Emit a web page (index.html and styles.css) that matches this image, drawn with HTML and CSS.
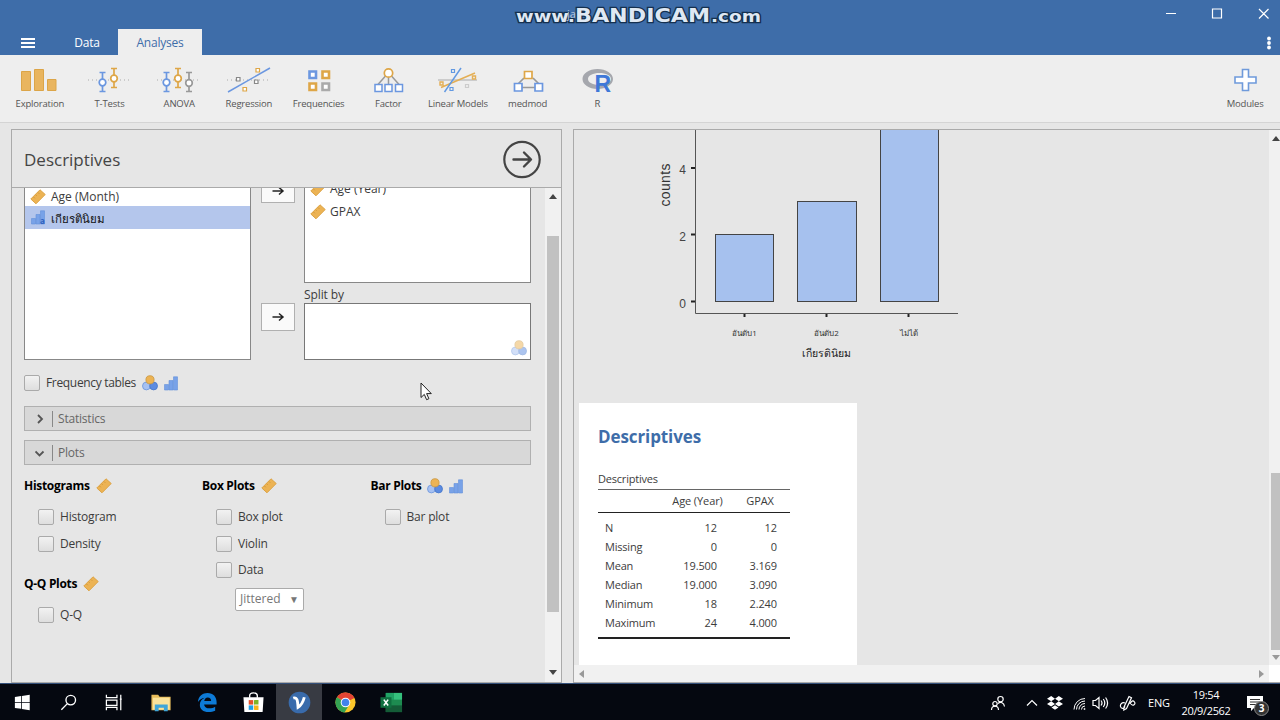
FILE: index.html
```html
<!DOCTYPE html>
<html lang="en">
<head>
    <meta charset="UTF-8">
    <meta name="viewport" content="width=device-width, initial-scale=1.0">
    <title>jamovi</title>
    <link rel="stylesheet" href="styles.css">
</head>
<body>
    <!-- shared measure-type icons -->
    <svg class="defs" width="0" height="0">
        <symbol id="ruler" viewBox="0 0 16 16">
            <path d="M.8 10 10 .8 15.200 5.500 6 14.800z" fill="#ecb354" stroke="#dca345" stroke-width="1" stroke-linejoin="round"/>
            <path d="M3.500 8l1.300 1.300M5.700 5.800l1 1M8 3.500l1.300 1.300" stroke="#c88c2e" stroke-width=".7"/>
        </symbol>
        <symbol id="nominal" viewBox="0 0 16 16">
            <circle cx="4.400" cy="11" r="3.900" fill="#a6c1f2" stroke="#6b94dc" stroke-width=".8"/>
            <circle cx="11.600" cy="11" r="3.900" fill="#5c8be0" stroke="#4677ca" stroke-width=".8"/>
            <circle cx="8" cy="4.800" r="4.100" fill="#ecb354" stroke="#c99843" stroke-width=".8"/>
        </symbol>
        <symbol id="ordinal" viewBox="0 0 16 16">
            <path d="M1.500 9.500h4V15h-4zM6 5.500h4V15H6zM10.500 1.800h4V15h-4z" fill="#78a2e8" stroke="#6390da" stroke-width=".6"/>
        </symbol>
    </svg>

    <header class="titlebar">
        <nav class="tabs">
            <button class="menu"><span></span><span></span><span></span></button>
            <button class="tab">Data</button>
            <button class="tab active">Analyses</button>
        </nav>
        <div class="window-side">
            <svg width="119" height="27" viewBox="0 0 119 27" fill="none" stroke="#fff" stroke-width="1.200">
                <path d="M5 13.500h10M51.500 9h9v9h-9zM98 9l9.500 9.500M107.500 9 98 18.500"/>
            </svg>
            <svg class="dots" width="6" height="14" viewBox="0 0 6 14" fill="#fff">
                <circle cx="3" cy="2.500" r="1.900"/><circle cx="3" cy="7" r="1.900"/><circle cx="3" cy="11.500" r="1.900"/>
            </svg>
        </div>
        <svg class="watermark" width="260" height="30" viewBox="0 0 260 30">
            <text class="mark" x="6" y="21.500" font-size="15" textLength="59" lengthAdjust="spacingAndGlyphs">www.</text>
            <text class="mark" x="65" y="22" font-size="19.500" textLength="135" lengthAdjust="spacingAndGlyphs">BANDICAM</text>
            <text class="mark" x="201" y="21.500" font-size="15" textLength="50" lengthAdjust="spacingAndGlyphs">.com</text>
            <text class="app-title" x="57" y="18">ja</text>
        </svg>
    </header>

    <div class="toolbar">
        <div class="tool">
            <svg width="44" height="30" viewBox="0 0 44 30" fill="#e9b55f" stroke="#dca548">
                <path d="M3.500 6.500h9v19h-9zM16.500 4.500h9v21h-9zM29.500 14.500h8.500v11h-8.500z"/>
            </svg>
            <span>Exploration</span>
        </div>
        <div class="tool">
            <svg width="44" height="30" viewBox="0 0 44 30" fill="none" stroke-width="1.700">
                <path d="M0 15h44" stroke="#aaa" stroke-width="1" stroke-dasharray="1 3"/>
                <path d="M14.500 7.500v19M11.500 7.500h6M11.500 26.500h6" stroke="#6b97e0"/><circle cx="14.500" cy="17.500" r="3.300" fill="#fff" stroke="#6b97e0"/>
                <path d="M26 3.500v19M23 3.500h6M23 22.500h6" stroke="#dea647"/><circle cx="26" cy="13.500" r="3.300" fill="#fff" stroke="#dea647"/>
            </svg>
            <span>T-Tests</span>
        </div>
        <div class="tool">
            <svg width="44" height="30" viewBox="0 0 44 30" fill="none" stroke-width="1.700">
                <path d="M0 15h44" stroke="#aaa" stroke-width="1" stroke-dasharray="1 3"/>
                <path d="M9.500 7.500v19M6.500 7.500h6M6.500 26.500h6" stroke="#6b97e0"/><circle cx="9.500" cy="17.500" r="3.300" fill="#fff" stroke="#6b97e0"/>
                <path d="M21 3.500v19M18 3.500h6M18 22.500h6" stroke="#dea647"/><circle cx="21" cy="13.500" r="3.300" fill="#fff" stroke="#dea647"/>
                <path d="M32 7.500v19M29 7.500h6M29 26.500h6" stroke="#999"/><circle cx="32" cy="18" r="3.300" fill="#fff" stroke="#999"/>
            </svg>
            <span>ANOVA</span>
        </div>
        <div class="tool">
            <svg width="44" height="30" viewBox="0 0 44 30" fill="#fff" stroke-width="1.200">
                <path d="M0 15h44" stroke="#aaa" stroke-width="1" stroke-dasharray="1 3"/>
                <path d="M1 27 43 3" stroke="#6b97e0" stroke-width="1.500"/>
                <path d="M29 3.500h3.500V7H29zM16 22.500h3.500V26H16z" stroke="#dea647"/>
                <path d="M9.500 12.500H13V16H9.500zM27.500 15H31v3.500h-3.500z" stroke="#888"/>
            </svg>
            <span>Regression</span>
        </div>
        <div class="tool">
            <svg width="44" height="30" viewBox="0 0 44 30" fill="#fff" stroke-width="2.600">
                <path d="M12.500 6.500H19V13h-6.500z" stroke="#6b97e0"/>
                <path d="M25.500 6.500H32V13h-6.500zM12.500 18.500H19V25h-6.500z" stroke="#dea647"/>
                <path d="M25.500 18.500H32V25h-6.500z" stroke="#aaa"/>
            </svg>
            <span>Frequencies</span>
        </div>
        <div class="tool">
            <svg width="44" height="30" viewBox="0 0 44 30" fill="#fff" stroke-width="1.500">
                <path d="M22.500 11v9M19.500 11 11.500 20M25.500 11l8 9" stroke="#999"/>
                <circle cx="22.500" cy="8" r="4.200" stroke="#dea647" stroke-width="1.700"/>
                <path d="M9 19.500h7v7H9zM19 19.500h7v7h-7zM29.500 19.500h7v7h-7z" stroke="#6b97e0"/>
            </svg>
            <span>Factor</span>
        </div>
        <div class="tool">
            <svg width="44" height="30" viewBox="0 0 44 30" fill="none" stroke-width="1.200">
                <path d="M2 15h39" stroke="#aaa"/>
                <path d="M5 22.500 39 8M4 17h3v3H4zM36.500 11h3v3h-3z" stroke="#e4af55" stroke-width="1.400"/>
                <path d="M8.500 27 25 3" stroke="#6299e2" stroke-width="1.500"/>
                <path d="M15.500 4.500h3v3h-3zM14 22.500h3v3h-3z" stroke="#6299e2"/>
                <path d="M29.500 19.500h3v3h-3z" stroke="#ccc"/>
            </svg>
            <span>Linear Models</span>
        </div>
        <div class="tool">
            <svg width="44" height="30" viewBox="0 0 44 30" fill="#fff" stroke-width="1.700">
                <path d="M18 13 11 20M27 13l7 7M15 22.500h15" stroke="#999"/>
                <path d="M18.500 6.500h7.500v7h-7.500z" stroke="#dea647"/>
                <path d="M8.500 18.500H16V26H8.500zM29 18.500h7.500V26H29z" stroke="#6b97e0"/>
            </svg>
            <span>medmod</span>
        </div>
        <div class="tool">
            <svg width="44" height="30" viewBox="0 0 44 30">
                <path fill="#a5a7ad" fill-rule="evenodd" d="M22.500 4C14 4 7.500 8.500 7.500 14s6.500 10 15 10 15.500-4.500 15.500-10S31 4 22.500 4zm2 4c6.500 0 11.500 2.500 11.500 6s-5 6-11.500 6-11.500-2.500-11.500-6 5-6 11.500-6z"/>
                <text class="r-mark" x="19.500" y="26.500">R</text>
            </svg>
            <span>R</span>
        </div>
        <div class="tool modules">
            <svg width="44" height="30" viewBox="0 0 44 30">
                <path d="M19.500 4.500h6v7.500h7.500v6h-7.500v7.500h-6V18H12v-6h7.500z" fill="#fff" stroke="#6f9adb" stroke-width="1.600"/>
            </svg>
            <span>Modules</span>
        </div>
    </div>

    <main class="workspace">
        <section class="options">
            <div class="options-header">
                <h1>Descriptives</h1>
                <svg width="40" height="40" viewBox="0 0 40 40" fill="none" stroke="#444">
                    <circle cx="20" cy="19.500" r="17.700" stroke-width="2.200"/>
                    <path d="M11.500 19.500h17M22 12.500l7 7-7 7" stroke-width="2.400" stroke-linecap="round" stroke-linejoin="round"/>
                </svg>
            </div>
            <div class="options-scroll">
                <div class="options-body">
                    <div class="assign">
                        <ul class="var-list source">
                            <li><svg class="icon"><use href="#ruler"/></svg>Age (Month)</li>
                            <li class="selected">
                                <svg class="icon" viewBox="0 0 16 16"><use href="#ordinal" width="16" height="16"/><text class="text-flag" x="10" y="15">a</text></svg><span class="thai">เกียรตินิยม</span>
                            </li>
                        </ul>
                        <div class="arrows">
                            <button><svg width="14" height="12" viewBox="0 0 14 12"><path d="M1.500 6h10.500M8 2.500 12 6 8 9.500"/></svg></button>
                            <button><svg width="14" height="12" viewBox="0 0 14 12"><path d="M1.500 6h10.500M8 2.500 12 6 8 9.500"/></svg></button>
                        </div>
                        <div class="targets">
                            <ul class="var-list chosen">
                                <li><svg class="icon"><use href="#ruler"/></svg>Age (Year)</li>
                                <li><svg class="icon"><use href="#ruler"/></svg>GPAX</li>
                            </ul>
                            <span class="target-label">Split by</span>
                            <div class="split-box"><svg class="icon"><use href="#nominal"/></svg></div>
                        </div>
                    </div>

                    <label class="check freq"><i></i>Frequency tables <svg class="icon"><use href="#nominal"/></svg><svg class="icon"><use href="#ordinal"/></svg></label>

                    <div class="section-bar">
                        <svg width="10" height="12" viewBox="0 0 10 12"><path d="M3 2l4 4-4 4"/></svg><span>Statistics</span>
                    </div>
                    <div class="section-bar">
                        <svg width="10" height="12" viewBox="0 0 10 12"><path d="M.500 4.500l4 4 4-4"/></svg><span>Plots</span>
                    </div>

                    <div class="plots">
                        <div>
                            <h2>Histograms <svg class="icon"><use href="#ruler"/></svg></h2>
                            <label class="check"><i></i>Histogram</label>
                            <label class="check"><i></i>Density</label>
                            <h2 class="second">Q-Q Plots <svg class="icon"><use href="#ruler"/></svg></h2>
                            <label class="check"><i></i>Q-Q</label>
                        </div>
                        <div>
                            <h2>Box Plots <svg class="icon"><use href="#ruler"/></svg></h2>
                            <label class="check"><i></i>Box plot</label>
                            <label class="check"><i></i>Violin</label>
                            <label class="check"><i></i>Data</label>
                            <div class="select">Jittered<span>▼</span></div>
                        </div>
                        <div>
                            <h2>Bar Plots <svg class="icon"><use href="#nominal"/></svg><svg class="icon"><use href="#ordinal"/></svg></h2>
                            <label class="check"><i></i>Bar plot</label>
                        </div>
                    </div>
                </div>
                <div class="scrollbar">
                    <svg width="8" height="5" viewBox="0 0 8 5"><path d="M0 5h8L4 0z"/></svg>
                    <div class="thumb"></div>
                    <svg width="8" height="5" viewBox="0 0 8 5"><path d="M0 0h8L4 5z"/></svg>
                </div>
            </div>
        </section>

        <section class="results">
            <div class="results-body">
                <svg class="chart" width="400" height="273" viewBox="574 130 400 273">
                    <g fill="#a6c1ee" stroke="#444" stroke-width="1">
                        <rect x="715.500" y="234.500" width="58" height="67"/>
                        <rect x="797.500" y="201.500" width="59" height="100"/>
                        <rect x="880.500" y="120.500" width="58" height="181"/>
                    </g>
                    <path d="M695.500 130v183.500H958" fill="none" stroke="#555"/>
                    <path d="M691 168h4M691 234.500h4M691 301.500h4M744.500 314v3M826.500 314v3M908.500 314v3" stroke="#222" stroke-width="2"/>
                    <g class="axis-num" text-anchor="end">
                        <text x="686" y="174">4</text>
                        <text x="686" y="241">2</text>
                        <text x="686" y="307.500">0</text>
                    </g>
                    <text class="axis-title" transform="translate(670 185) rotate(-90)" text-anchor="middle" textLength="43">counts</text>
                    <g class="axis-cat" text-anchor="middle">
                        <text x="744.500" y="336">อันดับ1</text>
                        <text x="826.500" y="336">อันดับ2</text>
                        <text x="908.500" y="336">ไม่ได้</text>
                    </g>
                    <text class="axis-name" x="826" y="357" text-anchor="middle">เกียรตินิยม</text>
                </svg>
                <article class="result-card">
                    <h2>Descriptives</h2>
                    <table>
                        <caption>Descriptives</caption>
                        <thead>
                            <tr><th></th><th>Age (Year)</th><th>GPAX</th></tr>
                        </thead>
                        <tbody>
                            <tr><td>N</td><td>12</td><td>12</td></tr>
                            <tr><td>Missing</td><td>0</td><td>0</td></tr>
                            <tr><td>Mean</td><td>19.500</td><td>3.169</td></tr>
                            <tr><td>Median</td><td>19.000</td><td>3.090</td></tr>
                            <tr><td>Minimum</td><td>18</td><td>2.240</td></tr>
                            <tr><td>Maximum</td><td>24</td><td>4.000</td></tr>
                        </tbody>
                    </table>
                </article>
            </div>
            <div class="scrollbar">
                <svg width="8" height="5" viewBox="0 0 8 5"><path d="M0 5h8L4 0z"/></svg>
                <div class="thumb"></div>
                <svg class="muted" width="8" height="5" viewBox="0 0 8 5"><path d="M0 0h8L4 5z"/></svg>
            </div>
            <div class="scrollbar-x">
                <svg width="5" height="8" viewBox="0 0 5 8"><path d="M5 0v8L0 4z"/></svg>
                <svg width="5" height="8" viewBox="0 0 5 8"><path d="M0 0v8l5-4z"/></svg>
            </div>
            <div class="corner"></div>
        </section>
    </main>

    <footer class="taskbar">
        <div class="apps">
            <div class="app"><svg viewBox="0 0 24 24" fill="#fff"><path d="M3 6.200l6.500-1v6.300H3zM10.300 5.100 18.500 4v7.500h-8.200zM3 12.300h6.500v6.300L3 17.700zM10.300 12.300h8.200v7.700l-8.200-1.200z"/></svg></div>
            <div class="app"><svg viewBox="0 0 24 24" fill="none" stroke="#fff" stroke-width="1.400"><circle cx="13.300" cy="9.500" r="5"/><path d="M9.800 13.200 3.500 19.500"/></svg></div>
            <div class="app"><svg viewBox="0 0 24 24" fill="none" stroke="#fff" stroke-width="1.300"><path d="M2.500 4v3h11V4M2.500 9.500h11v5.500h-11zM2.500 20v-3h11v3M17.500 4v16M16.500 8.500h2"/></svg></div>
            <div class="app"><svg viewBox="0 0 24 24"><path d="M1.500 4h7l1.500 2h11.500v14h-20z" fill="#e8bd5b"/><path d="M3 7h17.500v12.500H3z" fill="#fae29b"/><path d="M5 21v-7h13.500v7h-4v-3.500H9V21z" fill="#3fa5d8"/></svg></div>
            <div class="app"><svg viewBox="0 0 24 24"><path d="M2 11.500C2.500 5 7 2 12 2c6 0 9.500 4 9.500 9.500V14H8.500c.3 3 3 4 5.500 4 2.300 0 4.300-.6 6-1.600v4.200c-2 1-4.300 1.400-6.800 1.400C7.300 22 4 18.500 4 14.500 4 11 6 8.500 9 7c-3 .5-5.500 2-7 4.500zM8.600 10.500h7.200c0-2.300-1.300-3.700-3.500-3.700-2.100 0-3.400 1.600-3.700 3.700z" fill="#0d7ad6"/></svg></div>
            <div class="app"><svg viewBox="0 0 24 24"><path d="M8 7V5c0-4 8-4 8 0v2" fill="none" stroke="#fff" stroke-width="1.400"/><path d="M1.500 6.500h21L21.500 22h-19z" fill="#fff"/><path d="M7 9.500h4.700v4.700H7z" fill="#e5512b"/><path d="M12.500 9.500h4.700v4.700h-4.700z" fill="#7fb526"/><path d="M7 15h4.700v4.700H7z" fill="#1e9fe6"/><path d="M12.500 15h4.700v4.700h-4.700z" fill="#f7b61c"/></svg></div>
            <div class="app active"><svg viewBox="0 0 24 24"><circle cx="12" cy="12" r="11.300" fill="#396bab"/><path d="M5.500 7.500c4-1.500 4.500 2 5 9.500C14.500 14.500 16 10.500 17 6.500" fill="none" stroke="#fff" stroke-width="3"/></svg></div>
            <div class="app"><svg viewBox="0 0 24 24"><circle cx="12" cy="12" r="10.500" fill="#fbc62a"/><path d="M12 12 3 6.600A10.500 10.500 0 0 1 21.300 7z" fill="#e24434"/><path d="M3 6.600A10.500 10.500 0 0 0 11 22.400L16 14 12 12z" fill="#34a353"/><path d="M12 7h9.300L12 12z" fill="#e24434"/><circle cx="12" cy="12" r="5" fill="#fff"/><circle cx="12" cy="12" r="4" fill="#4283ec"/></svg></div>
            <div class="app"><svg viewBox="0 0 24 24"><path d="M6 2h17v20H6z" fill="#1d8b50"/><path d="M14.500 2H23v7h-8.500z" fill="#35c17d"/><path d="M6 2h8.500v7H6z" fill="#21a366"/><path d="M6 15h17v7H6z" fill="#145c37"/><path d="M.500 6.500h11.500v11H.500z" fill="#107040"/><path d="M4 9l4.500 6.200M8.500 9 4 15.200" stroke="#fff" stroke-width="1.600"/></svg></div>
        </div>
        <div class="tray">
            <svg width="16" height="16" viewBox="0 0 16 16"><circle cx="10.500" cy="4.200" r="2.700"/><circle cx="5" cy="8.700" r="2.200"/><path d="M1.500 15c0-5 7-5 7 0M8 8.500c2.500-2 6-1 6.500 3"/></svg>
            <svg class="chevron" width="12" height="12" viewBox="0 0 12 12"><path d="M1 8.500l5-5 5 5"/></svg>
            <svg class="dropbox" width="16" height="14" viewBox="0 0 16 14"><path d="M4.200 0 0 2.700l4.200 2.600L8 2.700zM11.800 0 8 2.700l3.800 2.600L16 2.700zM4.200 5.300 0 8l4.200 2.600L8 8zM11.800 5.300 8 8l3.800 2.600L16 8zM8 9.200l-3.500 2.300L8 13.800l3.500-2.300z"/></svg>
            <svg class="wifi" width="13" height="13" viewBox="0 0 13 13"><path d="M1 12.500A11 11 0 0 1 12 1.500M3.500 12.500A8.500 8.500 0 0 1 12 4M6 12.500a6 6 0 0 1 6-6M8.500 12.500A3.500 3.500 0 0 1 12 9"/><circle cx="11.500" cy="12" r=".6"/></svg>
            <svg class="volume" width="17" height="14" viewBox="0 0 17 14"><path d="M1 4.500h2.500L7 1.500v11L3.500 9.500H1zM9 4.500q2 2.500 0 5M11.300 3q3 4 0 8M13.600 1.500q4 5.500 0 11"/></svg>
            <svg class="pen" width="17" height="16" viewBox="0 0 17 16"><path d="M5 12 10 1.500l2.500 1.200L7.500 13.500 4.800 15zM6 8c-3-1-5 1-4.500 3.500S5 14 6 11.500M11 9c1-3 3-4 4.500-2s-1.500 4.500-3.500 2"/></svg>
            <span class="lang">ENG</span>
            <div class="clock"><span>19:54</span><span>20/9/2562</span></div>
            <div class="notify">
                <svg width="16" height="15" viewBox="0 0 16 15"><path d="M0 0h16v12H7l-3 3v-3H0z"/><path d="M3 3.500h10M3 6h10M3 8.500h6"/></svg>
                <b>3</b>
            </div>
        </div>
    </footer>

    <svg class="cursor" width="13" height="20" viewBox="0 0 13 20">
        <path d="M1 1v14.500l3.300-3.100 2.300 5.300 2.300-1-2.300-5.100h4.700z" fill="#fff" stroke="#222" stroke-width="1"/>
    </svg>
</body>
</html>
```
FILE: styles.css
```css
* {
    margin: 0;
    padding: 0;
    box-sizing: border-box;
}

body {
    width: 1280px;
    height: 720px;
    overflow: hidden;
    display: flex;
    flex-direction: column;
    background: #e6e6e6;
    color: #3c3c3c;
    font: 12px/16px "Open Sans", "Noto Sans", sans-serif;
}

button {
    font: inherit;
    border: none;
    background: none;
}

svg {
    display: block;
    flex: none;
}

.defs {
    position: absolute;
}

.icon {
    width: 16px;
    height: 16px;
}

/* title bar */
.titlebar {
    position: relative;
    height: 55px;
    flex: none;
    display: flex;
    justify-content: space-between;
    background: #3e6da9;
}

.tabs {
    display: flex;
    align-items: flex-end;
}

.menu {
    width: 56px;
    height: 26px;
    padding: 9px 21px 0;
    display: flex;
    flex-direction: column;
    gap: 2px;
}

.menu span {
    width: 14px;
    height: 2px;
    background: #fff;
}

.tab {
    width: 62px;
    height: 26px;
    padding-top: 2px;
    color: #fff;
    font-size: 12px;
    letter-spacing: -.2px;
}

.tab.active {
    width: 84px;
    background: #eee;
    color: #3e6da9;
}

.window-side {
    display: flex;
    flex-direction: column;
    align-items: flex-end;
}

.dots {
    margin: 9px 8px 0 0;
}

.watermark {
    position: absolute;
    left: 510px;
    top: 0;
}

.mark {
    font-family: "DejaVu Sans", sans-serif;
    font-weight: bold;
    fill: #dfe8f3;
    stroke: #15304f;
    stroke-width: 2.5px;
    paint-order: stroke;
}

.app-title {
    font-size: 11px;
    fill: #b9c9de;
}

/* analyses toolbar */
.toolbar {
    height: 68px;
    flex: none;
    display: flex;
    padding: 10px 0 0 5px;
    background: #eee;
    border-bottom: 1px solid #d4d4d4;
}

.tool {
    width: 69.700px;
    display: flex;
    flex-direction: column;
    align-items: center;
    white-space: nowrap;
    font-size: 9.500px;
    line-height: 14px;
    letter-spacing: -.2px;
    color: #555;
}

.tool span {
    margin-top: 2px;
}

.modules {
    margin-left: auto;
}

.r-mark {
    font: bold 23px "Liberation Sans", sans-serif;
    fill: #3f78d8;
}

/* panels */
.workspace {
    flex: 1;
    min-height: 0;
    display: flex;
    gap: 11px;
    padding: 6px 0 0 11px;
}

.options {
    width: 551px;
    height: 554px;
    display: flex;
    flex-direction: column;
    border: 1px solid #aaa;
}

.options-header {
    height: 58px;
    flex: none;
    display: flex;
    align-items: center;
    justify-content: space-between;
    padding: 2px 19px 0 12px;
    border-bottom: 1px solid #aaa;
}

.options-header h1 {
    font-size: 17px;
    font-weight: 400;
    line-height: 24px;
    color: #444;
}

.options-scroll {
    flex: 1;
    min-height: 0;
    display: flex;
    justify-content: space-between;
    overflow: hidden;
}

.options-body {
    width: 519px;
    padding-left: 12px;
}

.assign {
    height: 172px;
    display: flex;
}

.var-list {
    list-style: none;
    background: #fff;
    border: 1px solid #888;
    border-top: none;
}

.var-list li {
    height: 22.500px;
    display: flex;
    align-items: center;
    gap: 4px;
    padding-left: 5px;
    white-space: nowrap;
}

.var-list .selected {
    background: #b4c6ec;
    color: #111;
}

.thai {
    padding: 3px 0 0 1px;
    font-size: 11.500px;
}

.source {
    width: 227px;
}

.source li:first-child {
    height: 18px;
    padding-bottom: 1px;
    gap: 5px;
}

.chosen {
    height: 95px;
}

.chosen li:first-child {
    margin-top: -10px;
}

.text-flag {
    font: bold 8px "Open Sans", sans-serif;
    fill: #2f62c0;
}

.arrows {
    width: 53px;
    padding: 0 9px 0 10px;
    display: flex;
    flex-direction: column;
    gap: 100px;
}

.arrows button {
    height: 28px;
    display: flex;
    align-items: center;
    justify-content: center;
    background: #fafafa;
    border: 1px solid #b0b0b0;
}

.arrows button:first-child {
    height: 15px;
    padding-bottom: 8px;
    border-top: none;
}

.arrows path {
    fill: none;
    stroke: #222;
    stroke-width: 1.500;
}

.targets {
    width: 227px;
    display: flex;
    flex-direction: column;
}

.target-label {
    height: 20px;
    padding-top: 4px;
    letter-spacing: -.1px;
}

.split-box {
    height: 57px;
    display: flex;
    align-items: flex-end;
    justify-content: flex-end;
    padding: 3px;
    background: #fff;
    border: 1px solid #777;
}

.split-box .icon {
    opacity: .5;
}

.check {
    height: 26.500px;
    padding-left: 14px;
    display: flex;
    align-items: center;
    white-space: nowrap;
    letter-spacing: -.2px;
}

.check i {
    width: 16px;
    height: 16px;
    margin-right: 6px;
    border: 1px solid #aaa;
    border-radius: 2px;
    background: linear-gradient(#f2f2f2, #dedede);
}

.freq {
    height: 16px;
    margin: 15px 0;
    padding: 0;
    letter-spacing: -.33px;
}

.freq .icon {
    margin-left: 6px;
}

.freq .icon + .icon {
    margin-left: 5px;
}

.section-bar {
    width: 507px;
    height: 25px;
    margin-bottom: 9px;
    display: flex;
    align-items: center;
    gap: 7px;
    padding-left: 10px;
    background: #d8d8d8;
    border: 1px solid #b0b0b0;
    color: #666;
    letter-spacing: -.2px;
}

.section-bar path {
    fill: none;
    stroke: #555;
    stroke-width: 1.800;
}

.section-bar span {
    padding-left: 5px;
    border-left: 1px solid #888;
}

.plots {
    display: grid;
    grid-template-columns: 178px 168.500px 160px;
    padding-top: 3px;
}

.plots h2 {
    height: 18px;
    margin-bottom: 9px;
    display: flex;
    align-items: center;
    gap: 6px;
    font-size: 12px;
    letter-spacing: -.3px;
    color: #000;
    white-space: nowrap;
}

.plots .icon + .icon {
    margin-left: -1px;
}

.plots .second {
    margin-top: 18px;
}

.select {
    width: 69px;
    height: 23px;
    margin: 4px 0 0 33px;
    display: flex;
    align-items: center;
    justify-content: space-between;
    padding: 0 4px;
    background: #fff;
    border: 1px solid #aaa;
    border-radius: 2px;
    color: #777;
}

.select span {
    font-size: 10px;
}

.scrollbar {
    width: 16px;
    display: flex;
    flex-direction: column;
    align-items: center;
    padding: 6px 1px 7px 0;
    background: #f1f1f1;
}

.scrollbar path {
    fill: #444;
}

.scrollbar .muted path {
    fill: #999;
}

.thumb {
    width: 12px;
    height: 376px;
    margin: 37px 0 auto;
    background: #c1c1c1;
}

/* results */
.results {
    flex: 1;
    height: 554px;
    display: grid;
    grid-template-columns: 1fr 11px;
    grid-template-rows: 535px 17px;
    border: 1px solid #aaa;
    border-right: none;
}

.results .scrollbar {
    width: 11px;
    align-items: flex-end;
    padding: 6px 0 5px;
}

.results .thumb {
    width: 9px;
    height: 177px;
    margin: 332px 0 auto;
}

.scrollbar-x {
    display: flex;
    align-items: center;
    justify-content: space-between;
    padding: 0 5px;
    background: #f1f1f1;
}

.scrollbar-x path {
    fill: #999;
}

.corner {
    background: #fff;
}

.axis-num {
    font: 12px "Liberation Sans", sans-serif;
    fill: #444;
}

.axis-title {
    font: 14px "Liberation Sans", sans-serif;
    fill: #333;
}

.axis-cat {
    font-size: 8px;
    fill: #333;
}

.axis-name {
    font-size: 10.500px;
    fill: #222;
}

.result-card {
    width: 278px;
    height: 262px;
    margin-left: 5px;
    padding: 22px 19px 0;
    background: #fff;
}

.result-card h2 {
    font-size: 17px;
    line-height: 24px;
    letter-spacing: -.1px;
    color: #3e6da9;
}

.result-card table {
    width: 192px;
    margin-top: 22px;
    table-layout: fixed;
    border-collapse: collapse;
    border-bottom: 2px solid #222;
    font-size: 11px;
    letter-spacing: -.1px;
}

caption {
    height: 18px;
    text-align: left;
    white-space: nowrap;
    letter-spacing: -.2px;
}

th {
    height: 23px;
    font-weight: 400;
    white-space: nowrap;
    border-top: 1px solid #666;
    border-bottom: 1px solid #222;
}

th:first-child {
    width: 67px;
}

th:nth-child(2) {
    width: 65px;
}

td {
    height: 19px;
    padding-right: 13px;
    text-align: right;
}

td:first-child {
    padding: 0 0 0 7px;
    text-align: left;
    letter-spacing: -.2px;
}

tbody tr:first-child td {
    height: 25px;
    padding-top: 6px;
}

tbody tr:last-child td {
    height: 24px;
    padding-bottom: 5px;
}

/* taskbar */
.taskbar {
    height: 37px;
    flex: none;
    display: flex;
    justify-content: space-between;
    background: #050810;
    border-top: 1px solid #34507a;
    color: #fff;
}

.apps {
    display: flex;
}

.app {
    width: 46px;
    display: flex;
    align-items: center;
    justify-content: center;
    padding-top: 1px;
}

.app svg {
    width: 23px;
    height: 23px;
}

.app.active {
    background: #383b43;
}

.tray {
    display: flex;
    align-items: center;
    padding: 2px 9px 0 0;
}

.tray svg {
    fill: none;
    stroke: #fff;
    stroke-width: 1.200;
}

.tray .chevron {
    margin-left: 20px;
}

.tray .dropbox {
    margin-left: 9px;
    fill: #fff;
    stroke: none;
}

.tray .wifi {
    margin-left: 10px;
    stroke-width: 1;
}

.tray .volume {
    margin-left: 6px;
}

.tray .pen {
    margin-left: 10px;
}

.lang {
    width: 22px;
    margin-left: 12px;
    font-size: 11px;
    letter-spacing: -.2px;
}

.clock {
    width: 50px;
    margin-left: 11px;
    display: flex;
    flex-direction: column;
    align-items: center;
    font-size: 11px;
    letter-spacing: -.35px;
}

.notify {
    position: relative;
    width: 24px;
    margin-left: 16px;
}

.notify svg path:first-child {
    fill: #fff;
    stroke: none;
}

.notify svg path:last-child {
    stroke: #333;
    stroke-width: 1;
}

.notify b {
    position: absolute;
    left: 7px;
    top: 5px;
    width: 15px;
    height: 15px;
    border: 1px solid #888;
    border-radius: 50%;
    background: #333;
    text-align: center;
    font-size: 10px;
    line-height: 13px;
}

.cursor {
    position: absolute;
    left: 420px;
    top: 382px;
}
```
